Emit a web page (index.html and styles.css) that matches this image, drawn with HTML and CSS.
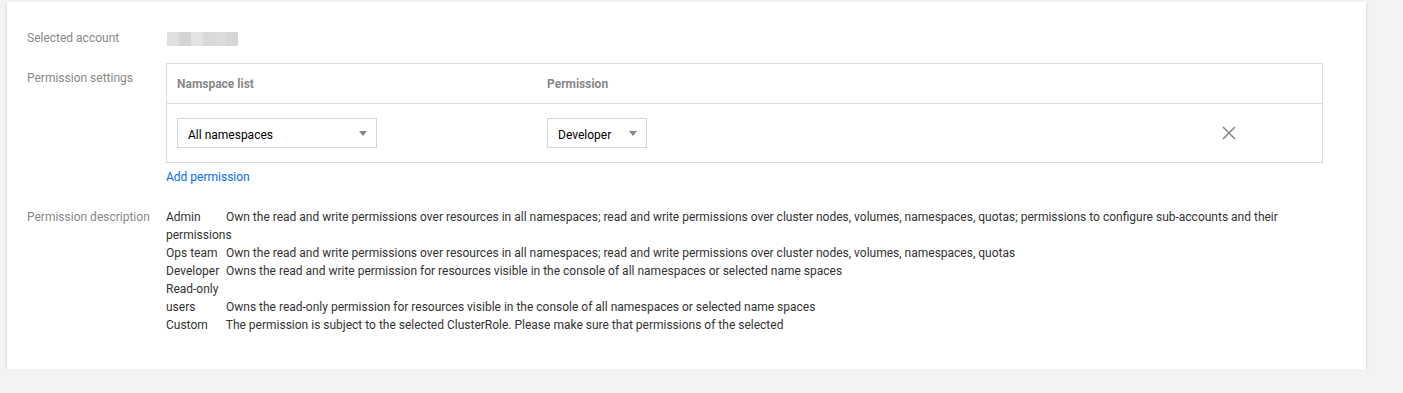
FILE: index.html
```html
<!DOCTYPE html>
<html lang="en">
<head>
    <meta charset="UTF-8">
    <title>Sub-account permissions</title>
    <link rel="stylesheet" href="styles.css">
</head>
<body>
    <div class="card">
        <div class="form-row row-account">
            <div class="form-label">Selected account</div>
            <div class="form-field">
                <div class="masked">
                    <span class="m1"></span><span class="m2"></span><span class="m3"></span><span class="m4"></span><span class="m5"></span><span class="m6"></span>
                </div>
            </div>
        </div>

        <div class="form-row row-settings">
            <div class="form-label">Permission settings</div>
            <div class="form-field">
                <div class="perm-table">
                    <div class="perm-head">
                        <div class="cell">Namspace list</div>
                        <div class="cell">Permission</div>
                        <div class="cell"></div>
                    </div>
                    <div class="perm-body">
                        <div class="cell">
                            <div class="select select-wide">All namespaces<i class="caret"></i></div>
                        </div>
                        <div class="cell">
                            <div class="select select-narrow">Developer<i class="caret"></i></div>
                        </div>
                        <div class="cell">
                            <svg class="remove" width="14" height="14" viewBox="0 0 14 14">
                                <path d="M1 1 L13 13 M13 1 L1 13" stroke="#888" stroke-width="1.6" fill="none"/>
                            </svg>
                        </div>
                    </div>
                </div>
                <a class="add-link" href="#">Add permission</a>
            </div>
        </div>

        <div class="form-row row-desc">
            <div class="form-label">Permission description</div>
            <div class="form-field desc">
                <p class="desc-line"><span class="role">Admin</span> Own the read and write permissions over resources in all namespaces; read and write permissions over cluster nodes, volumes, namespaces, quotas; permissions to configure sub-accounts and their permissions</p>
                <p class="desc-line"><span class="role">Ops team</span> Own the read and write permissions over resources in all namespaces; read and write permissions over cluster nodes, volumes, namespaces, quotas</p>
                <p class="desc-line"><span class="role">Developer</span> Owns the read and write permission for resources visible in the console of all namespaces or selected name spaces</p>
                <p class="desc-line"><span class="role">Read-only users</span> Owns the read-only permission for resources visible in the console of all namespaces or selected name spaces</p>
                <p class="desc-line"><span class="role">Custom</span> The permission is subject to the selected ClusterRole. Please make sure that permissions of the selected</p>
            </div>
        </div>
    </div>
</body>
</html>
```

FILE: styles.css
```css
* {
    margin: 0;
    padding: 0;
    box-sizing: border-box;
}

body {
    background-color: #f2f3f5;
    font-family: 'Roboto', 'Liberation Sans', sans-serif;
    font-size: 12px;
    line-height: 18px;
    color: #333;
}

.card {
    width: 1359px;
    margin: 2px 0 0 7px;
    padding: 21px 20px 35px 20px;
    background: white;
    box-shadow: 0 2px 3px rgba(0,0,0,0.18);
}

.form-row {
    display: flex;
}

.form-label {
    width: 139px;
    flex-shrink: 0;
    padding-top: 6px;
    color: #888;
}

.form-field {
    flex: 1;
}

.row-account {
    height: 30px;
    margin-bottom: 10px;
}

.row-account .form-field {
    padding-top: 9px;
}

.masked {
    display: flex;
    height: 14px;
    margin-left: 1px;
}

.masked span {
    display: block;
    height: 14px;
}

.masked .m1 { width: 12px; background: #e0dfe0; }
.masked .m2 { width: 12px; background: #d6d3d6; }
.masked .m3 { width: 12px; background: #e4e3e4; }
.masked .m4 { width: 12px; background: #d9d9d9; }
.masked .m5 { width: 11px; background: #dcdcdc; }
.masked .m6 { width: 12px; background: #d6d6d6; }

.row-settings {
    margin-bottom: 22px;
}

.perm-table {
    width: 1157px;
    border: 1px solid #d9dde3;
}

.perm-head,
.perm-body {
    display: grid;
    grid-template-columns: 370px 1fr 110px;
}

.perm-head {
    height: 40px;
    padding-top: 1px;
    border-bottom: 1px solid #d9dde3;
    align-items: center;
}

.perm-head .cell {
    padding: 0 10px;
    color: #888;
    font-weight: bold;
}

.perm-body {
    padding: 14px 0;
    align-items: center;
}

.perm-body .cell {
    padding: 0 10px;
}

.select {
    position: relative;
    height: 30px;
    line-height: 26px;
    padding: 3px 24px 0 10px;
    border: 1px solid #cfd5de;
    color: #000;
    background: white;
}

.select-wide {
    width: 200px;
}

.select-narrow {
    width: 100px;
}

.caret {
    position: absolute;
    right: 9px;
    top: 12px;
    width: 0;
    height: 0;
    border-left: 4px solid transparent;
    border-right: 4px solid transparent;
    border-top: 5px solid #888;
}

.remove {
    display: block;
}

.add-link {
    display: inline-block;
    margin-top: 5px;
    color: #006eff;
    text-decoration: none;
}

.row-desc .form-label {
    padding-top: 0;
}

.desc {
    width: 1157px;
    flex: none;
}

.role {
    display: inline-block;
    width: 60px;
    margin-right: -3px;
}
```
